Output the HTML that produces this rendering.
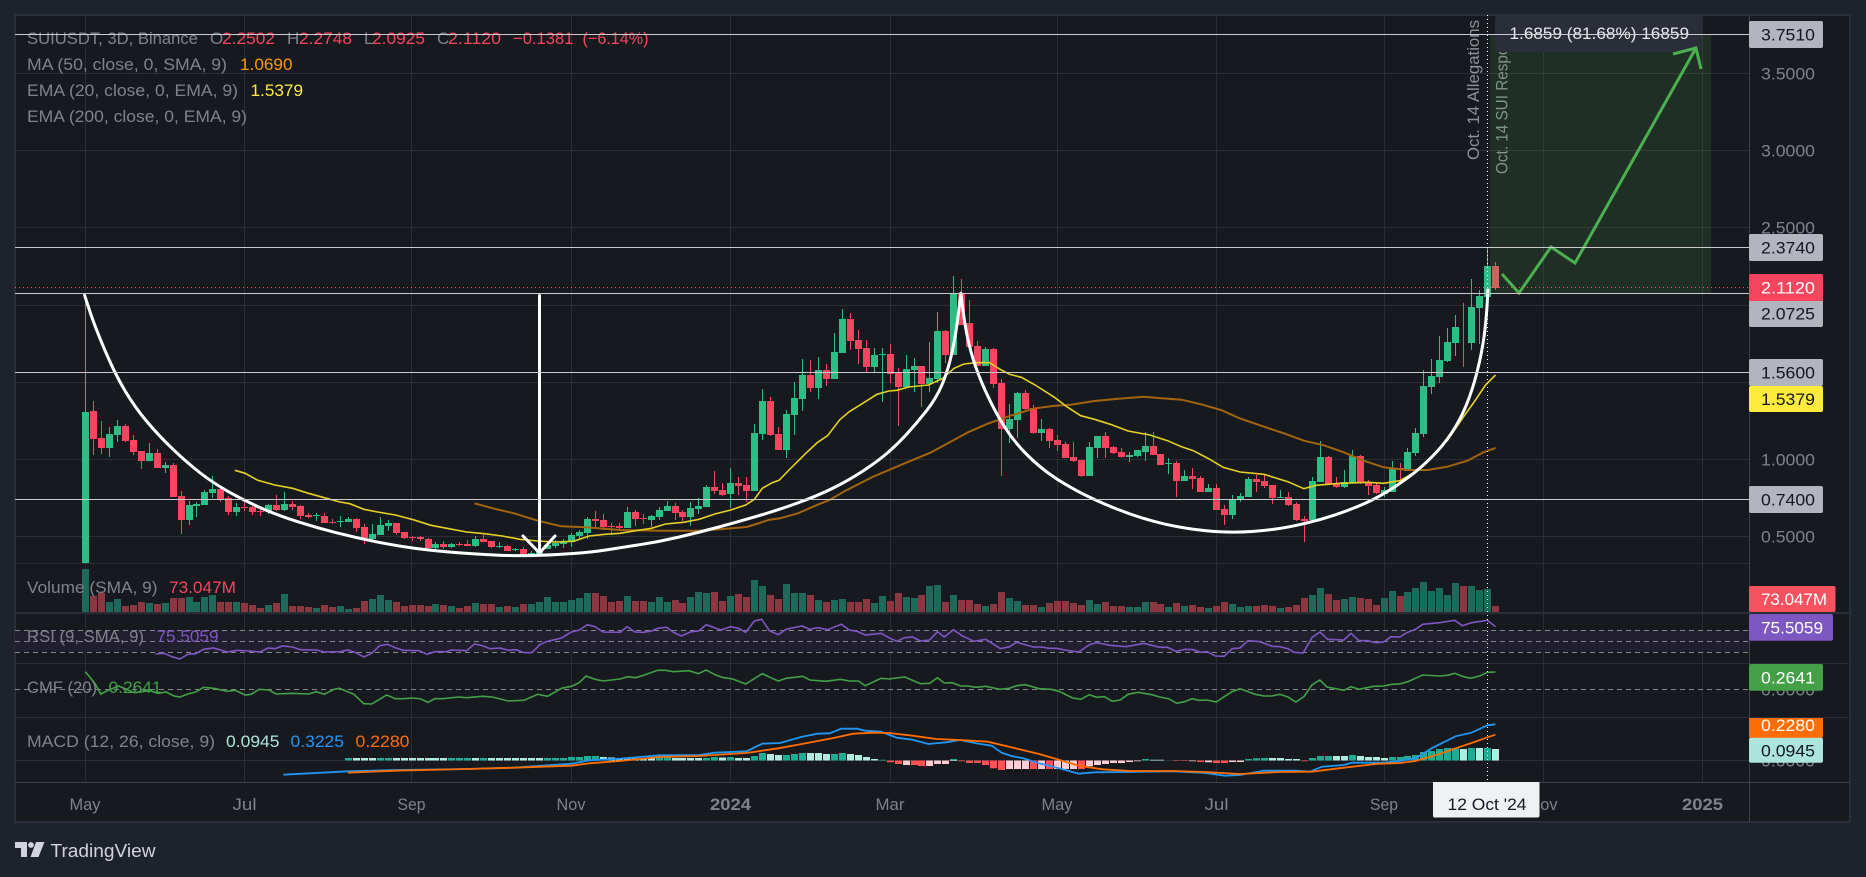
<!DOCTYPE html>
<html lang="en"><head><meta charset="utf-8"><title>SUIUSDT 3D chart</title>
<style>
html,body{margin:0;padding:0;background:#1e222d;width:1866px;height:877px;overflow:hidden}
svg{display:block;position:absolute;left:0;top:0}
text{font-family:"Liberation Sans",sans-serif;font-size:17px;white-space:pre}
.g{fill:#7f828c}.r{fill:#f7455f}
</style></head><body>
<svg width="1866" height="877" viewBox="0 0 1866 877" xmlns="http://www.w3.org/2000/svg">
<defs><clipPath id="macdclip"><rect x="1749" y="718" width="100" height="64"/></clipPath></defs>
<rect width="1866" height="877" fill="#1e222d"/>
<rect x="15" y="15" width="1835" height="807" fill="#161a1f" stroke="#2a2e39" stroke-width="2"/>

<!-- grid -->
<path fill="none" stroke="#2a2d33" stroke-width="1" d="M85.5 15V782M244.5 15V782M411.5 15V782M571.5 15V782M730.5 15V782M890.5 15V782M1057.5 15V782M1216.5 15V782M1384.5 15V782M1543.5 15V782M1702.5 15V782M15 73.5H1749M15 150.5H1749M15 227.5H1749M15 305.5H1749M15 382.5H1749M15 459.5H1749M15 536.5H1749M15 563.5H1749M15 760.5H1749"/>
<rect x="15" y="630" width="1734" height="22" fill="#211e2e"/>
<path fill="none" stroke="#2b2e36" stroke-width="2" d="M15 613H1850"/>
<path fill="none" stroke="#2b2e36" stroke-width="1" d="M15 663.5H1850M15 717.5H1850"/>
<path fill="none" stroke="#3e4148" stroke-width="1" d="M15 782.5H1850M1749.5 15V822"/>
<path fill="none" stroke="#85878e" stroke-width="1" stroke-dasharray="5 4" d="M15 630.5H1749M15 641.5H1749M15 652.5H1749M15 689.5H1749"/>

<!-- volume -->
<path fill="none" stroke="#1e6a5a" stroke-width="7" d="M85.5 569V612M109.5 602V612M117.5 599V612M149.5 603V612M165.5 603V612M189.5 597V612M196.5 602V612M204.5 597V612M212.5 595V612M236.5 602V612M268.5 605V612M284.5 594V612M316.5 608V612M340.5 606V612M348.5 609V612M372.5 599V612M380.5 595V612M388.5 600V612M435.5 604V612M451.5 606V612M475.5 603V612M499.5 607V612M515.5 607V612M531.5 604V612M539.5 602V612M547.5 597V612M555.5 602V612M563.5 602V612M571.5 600V612M579.5 598V612M587.5 593V612M627.5 596V612M651.5 602V612M659.5 597V612M667.5 602V612M690.5 597V612M698.5 592V612M706.5 593V612M730.5 596V612M754.5 580V612M762.5 586V612M786.5 584V612M794.5 593V612M802.5 593V612M818.5 600V612M834.5 600V612M842.5 599V612M874.5 603V612M882.5 596V612M906.5 597V612M914.5 598V612M929.5 586V612M937.5 585V612M953.5 595V612M985.5 606V612M1009.5 598V612M1017.5 601V612M1041.5 607V612M1089.5 600V612M1097.5 604V612M1129.5 607V612M1137.5 607V612M1145.5 602V612M1168.5 607V612M1184.5 606V612M1208.5 608V612M1232.5 604V612M1240.5 607V612M1248.5 606V612M1280.5 608V612M1312.5 595V612M1320.5 588V612M1344.5 599V612M1352.5 597V612M1384.5 598V612M1392.5 591V612M1407.5 592V612M1415.5 588V612M1423.5 582V612M1431.5 591V612M1439.5 588V612M1447.5 595V612M1455.5 583V612M1471.5 586V612M1479.5 590V612M1487.5 589V612"/>
<path fill="none" stroke="#8c3642" stroke-width="7" d="M93.5 596V612M101.5 593V612M125.5 606V612M133.5 605V612M141.5 602V612M157.5 604V612M173.5 598V612M181.5 598V612M220.5 602V612M228.5 602V612M244.5 603V612M252.5 605V612M260.5 608V612M276.5 603V612M292.5 606V612M300.5 606V612M308.5 607V612M324.5 605V612M332.5 607V612M356.5 608V612M364.5 601V612M396.5 602V612M404.5 606V612M412.5 605V612M420.5 605V612M428.5 606V612M443.5 605V612M459.5 608V612M467.5 606V612M483.5 604V612M491.5 604V612M507.5 606V612M523.5 604V612M595.5 593V612M603.5 596V612M611.5 602V612M619.5 601V612M635.5 601V612M643.5 601V612M675.5 600V612M682.5 603V612M714.5 592V612M722.5 601V612M738.5 594V612M746.5 597V612M770.5 595V612M778.5 599V612M810.5 595V612M826.5 602V612M850.5 602V612M858.5 602V612M866.5 599V612M890.5 601V612M898.5 593V612M921.5 595V612M945.5 602V612M961.5 600V612M969.5 600V612M977.5 604V612M993.5 604V612M1001.5 592V612M1025.5 605V612M1033.5 605V612M1049.5 603V612M1057.5 601V612M1065.5 601V612M1073.5 603V612M1081.5 605V612M1105.5 602V612M1113.5 606V612M1121.5 606V612M1153.5 602V612M1160.5 604V612M1176.5 603V612M1192.5 605V612M1200.5 607V612M1216.5 606V612M1224.5 602V612M1256.5 606V612M1264.5 605V612M1272.5 606V612M1288.5 607V612M1296.5 605V612M1304.5 598V612M1328.5 594V612M1336.5 600V612M1360.5 598V612M1368.5 599V612M1376.5 605V612M1400.5 596V612M1463.5 586V612M1495.5 606V612"/>

<!-- candles: wicks -->
<path fill="none" stroke="#2ebd85" stroke-width="1" d="M85.5 295V412M109.5 427V457M117.5 420V442M149.5 443V461M165.5 462V473M189.5 501V525M196.5 502V517M204.5 490V505M212.5 476V498M236.5 503V516M268.5 504V514M284.5 492V511M316.5 513V521M340.5 516V527M348.5 517V522M372.5 524V540M380.5 517V535M388.5 520V531M435.5 542V550M451.5 543V548M475.5 536V547M499.5 542V548M515.5 548V551M531.5 551V555M539.5 550V555M547.5 542V549M555.5 540V548M563.5 539V548M571.5 533V547M579.5 530V539M587.5 517V539M627.5 507V528M651.5 515V527M659.5 507V520M667.5 501V511M690.5 502V526M698.5 498V514M706.5 485V507M730.5 468V508M754.5 424V491M762.5 389V440M786.5 410V458M794.5 382V435M802.5 359V411M818.5 357V399M834.5 333V379M842.5 309V353M874.5 348V373M882.5 348V402M906.5 355V388M914.5 358V392M929.5 342V392M937.5 312V383M953.5 276V355M985.5 347V366M1009.5 404V443M1017.5 392V438M1041.5 419V441M1089.5 442V476M1097.5 436V458M1129.5 452V462M1137.5 450V457M1145.5 432V461M1168.5 458V474M1184.5 470V481M1208.5 484V492M1232.5 495V519M1240.5 493V502M1248.5 477V497M1280.5 490V498M1312.5 477V520M1320.5 441V482M1344.5 470V488M1352.5 450V484M1384.5 487V497M1392.5 461V492M1407.5 448V471M1415.5 428V456M1423.5 370V437M1431.5 359V394M1439.5 336V383M1447.5 328V362M1455.5 315V356M1471.5 279V350M1479.5 290V344M1487.5 247V297"/>
<path fill="none" stroke="#f7455f" stroke-width="1" d="M93.5 401V455M101.5 421V454M125.5 424V442M133.5 435V455M141.5 451V469M157.5 449V468M173.5 463V497M181.5 491V534M220.5 487V502M228.5 496V515M244.5 502V511M252.5 506V515M260.5 507V516M276.5 495V511M292.5 501V510M300.5 505V519M308.5 513V518M324.5 513V523M332.5 519V524M356.5 518V532M364.5 524V544M396.5 523V535M404.5 532V539M412.5 536V541M420.5 536V541M428.5 538V549M443.5 541V549M459.5 542V546M467.5 540V546M483.5 535V542M491.5 541V548M507.5 545V551M523.5 547V554M595.5 511V529M603.5 514V530M611.5 523V535M619.5 523V531M635.5 510V526M643.5 514V524M675.5 503V520M682.5 510V521M714.5 471V494M722.5 483V496M738.5 477V495M746.5 477V502M770.5 397V436M778.5 427V450M810.5 360V392M826.5 364V386M850.5 313V350M858.5 330V364M866.5 340V372M890.5 344V383M898.5 368V426M921.5 366V407M945.5 330V363M961.5 279V325M969.5 300V347M977.5 341V366M993.5 348V388M1001.5 379V476M1025.5 390V410M1033.5 405V434M1049.5 428V448M1057.5 435V451M1065.5 442V458M1073.5 442V462M1081.5 460V477M1105.5 432V458M1113.5 446V454M1121.5 448V458M1153.5 432V455M1160.5 454V465M1176.5 461V497M1192.5 468V489M1200.5 476V492M1216.5 484V510M1224.5 505V525M1256.5 475V492M1264.5 474V488M1272.5 485V504M1288.5 492V506M1296.5 502V521M1304.5 516V542M1328.5 456V484M1336.5 477V488M1360.5 455V484M1368.5 480V495M1376.5 482V494M1400.5 463V480M1463.5 303V367"/>
<!-- candles: bodies -->
<path fill="none" stroke="#2ebd85" stroke-width="7" d="M85.5 412V563M109.5 434V448M117.5 426V435M149.5 453V461M165.5 465V468M189.5 505V520M196.5 504V506M204.5 492V505M212.5 489V493M236.5 507V512M268.5 505V511M284.5 504V510M316.5 515V516M340.5 521V522M348.5 519V522M372.5 534V539M380.5 525V535M388.5 523V526M435.5 544V548M451.5 544V547M475.5 539V546M499.5 546V547M515.5 549V550M531.5 553V555M539.5 552V554M547.5 545V549M555.5 543V546M563.5 541V544M571.5 535V542M579.5 532V536M587.5 519V533M627.5 512V528M651.5 516V520M659.5 510V517M667.5 506V511M690.5 508V517M698.5 506V509M706.5 487V507M730.5 483V494M754.5 433V491M762.5 401V434M786.5 414V450M794.5 398V415M802.5 375V399M818.5 370V388M834.5 352V379M842.5 319V353M874.5 355V367M882.5 354V355M906.5 369V387M914.5 366V370M929.5 378V384M937.5 331V379M953.5 293V355M985.5 349V366M1009.5 419V429M1017.5 393V420M1041.5 429V433M1089.5 447V476M1097.5 436V448M1129.5 455V457M1137.5 450V456M1145.5 446V452M1168.5 463V464M1184.5 476V481M1208.5 488V492M1232.5 500V515M1240.5 496V500M1248.5 479V497M1280.5 497V498M1312.5 481V520M1320.5 457V482M1344.5 482V487M1352.5 456V483M1384.5 490V494M1392.5 468V492M1407.5 452V471M1415.5 433V453M1423.5 386V434M1431.5 376V387M1439.5 360V377M1447.5 342V361M1455.5 327V343M1471.5 307V343M1479.5 296V308M1487.5 266V297"/>
<path fill="none" stroke="#f7455f" stroke-width="7" d="M93.5 411V439M101.5 438V448M125.5 426V441M133.5 440V452M141.5 451V461M157.5 453V468M173.5 465V497M181.5 496V520M220.5 489V499M228.5 498V512M244.5 507V508M252.5 507V512M260.5 511V512M276.5 505V510M292.5 504V507M300.5 506V516M308.5 515V517M324.5 516V523M332.5 522V523M356.5 519V528M364.5 527V538M396.5 523V533M404.5 532V538M412.5 537V538M420.5 537V539M428.5 539V548M443.5 544V547M459.5 544V545M467.5 544V546M483.5 539V542M491.5 541V547M507.5 546V551M523.5 549V554M595.5 519V521M603.5 520V527M611.5 526V527M619.5 526V528M635.5 512V519M643.5 518V519M675.5 506V513M682.5 512V517M714.5 487V491M722.5 490V495M738.5 483V486M746.5 485V491M770.5 401V435M778.5 434V450M810.5 375V388M826.5 370V379M850.5 319V341M858.5 340V349M866.5 348V367M890.5 354V374M898.5 373V387M921.5 366V384M945.5 331V355M961.5 293V325M969.5 323V347M977.5 346V366M993.5 349V384M1001.5 383V429M1025.5 393V409M1033.5 408V433M1049.5 429V441M1057.5 440V445M1065.5 444V458M1073.5 457V461M1081.5 460V476M1105.5 436V448M1113.5 447V453M1121.5 452V457M1153.5 446V455M1160.5 454V465M1176.5 463V481M1192.5 476V479M1200.5 478V492M1216.5 488V510M1224.5 509V515M1256.5 479V482M1264.5 481V486M1272.5 485V498M1288.5 497V505M1296.5 504V520M1304.5 519V521M1328.5 457V484M1336.5 483V487M1360.5 456V483M1368.5 482V486M1376.5 485V493M1400.5 468V470"/>
<path fill="none" stroke="#e2565f" stroke-width="1" d="M1495.5 262V290"/>
<path fill="none" stroke="#e2565f" stroke-width="7" d="M1495.5 266V288"/>

<!-- MAs -->
<polyline fill="none" stroke="#a3640d" stroke-width="2" points="474.5,503.3 494.3,508.7 514,513.3 537.8,520.7 561.5,526.3 585.2,527.3 620,530 659.5,530.7 699.1,530.7 722.8,529 746.5,527 756.4,524 768.3,520 780.1,518.3 797.9,513.3 817.7,504.7 829.6,500 845.4,490.7 873.1,476.7 904.7,463.3 930.4,452.7 952.1,441 968,432.3 987.7,423.7 1011.5,415.3 1035.2,408.3 1055,405.7 1070.8,404.7 1094.5,401 1118.2,398.7 1143.9,396.7 1161.7,398.3 1181.5,399.7 1201.3,404.3 1221,410 1240,418.5 1264,426.7 1283.9,433.3 1303.9,440.7 1323.8,445.3 1343.8,452.3 1363.8,460.7 1383.7,467.3 1407.7,470 1427.6,470 1447.6,466.7 1467.5,460.7 1483.5,452.3 1495.5,448"/>
<polyline fill="none" stroke="#e6d025" stroke-width="1.6" points="234.9,470.3 245.2,473.3 257.8,480.3 274.8,485 292.6,488.3 308.4,493.3 324.2,497.7 340,502 349.9,503.7 363.8,509.3 377.6,512 395.4,515 413.2,519.7 431,525.3 448.8,528.7 466.6,532 484.4,533.7 502.2,536 520,539.3 537.8,541 555.6,542 573.3,541.3 589.2,536 605,534.3 620,533.3 635.8,530.7 651.6,528.3 665.5,524 683.3,522.3 699.1,519.3 714.9,514 730.7,510 745.7,505 754.4,499.3 762.3,488.3 772.2,482.7 779,480.3 790,469 805.8,453.3 817.7,442.3 827.6,435.7 839.5,420 849.3,411.7 861.2,404.3 877,394.3 888.9,391 896.8,390.3 908.7,387 928.4,385 942.3,378.7 954.1,368.3 964,364 975.9,362.7 989.7,362.7 999.6,369 1009.5,374.3 1021.3,377.3 1035.2,385 1055,397.7 1066.8,406.7 1080.7,415.7 1094.5,419.3 1110.3,424.3 1128.1,431 1149.9,435 1167.6,440.7 1181.5,446.7 1193.4,450.7 1209.2,459 1223,467.3 1240,472 1264,474.3 1287.9,481.7 1303.9,488.7 1315.8,485.3 1339.8,483.3 1367.7,482.3 1383.7,483.3 1399.7,480.7 1415.6,471.7 1431.6,456.7 1447.6,440 1463.6,416.7 1475.5,400 1485.5,385 1495.5,375"/>

<!-- projection box -->
<rect x="1490" y="34" width="221" height="259.5" fill="rgb(90,175,80)" fill-opacity=".14"/>

<!-- cup curves -->
<g fill="none" stroke="#fff" stroke-width="3" stroke-linejoin="round" stroke-linecap="round">
<path d="M84.6 295.3L89.75 311Q94.9 326.7 104.8 350Q114.7 373.3 124.55 390Q134.4 406.7 146.3 420.85Q158.2 435 172 448.35Q185.8 461.7 199.65 472.5Q213.5 483.3 229.35 492.15Q245.2 501 261 508Q276.8 515 296.55 521.35Q316.3 527.7 336.1 532.7Q355.9 537.7 375.65 541.7Q395.4 545.7 415.2 548.35Q435 551 454.75 552.5Q474.5 554 494.25 555Q514 556 533.8 555.5Q553.6 555 573.35 553.5Q593.1 552 606.55 549.85Q620 547.7 639.75 544.7Q659.5 541.7 679.3 537Q699.1 532.3 718.85 527Q738.6 521.7 758.4 515.85Q778.2 510 797.95 502.85Q817.7 495.7 833.5 487.85Q849.3 480 863.15 470.85Q877 461.7 886.9 453.35Q896.8 445 906.7 434.15Q916.6 423.3 926.45 410.8Q936.3 398.3 942.25 384.15Q948.2 370 952.15 351.65Q956.1 333.3 958.45 313.3L960.8 293.3"/>
<path d="M960.8 293.3L963.4 313.3Q966 333.3 970.95 351.65Q975.9 370 985.75 391.65Q995.6 413.3 1005.5 428.3Q1015.4 443.3 1027.25 455Q1039.1 466.7 1050.95 475Q1062.8 483.3 1078.65 491.65Q1094.5 500 1114.25 508Q1134 516 1153.8 521.35Q1173.6 526.7 1193.35 529.2Q1213.1 531.7 1226.55 532Q1240 532.3 1252 531.5Q1264 530.7 1275.95 529Q1287.9 527.3 1303.85 523.65Q1319.8 520 1335.8 514.65Q1351.8 509.3 1365.75 503Q1379.7 496.7 1393.7 487.5Q1407.7 478.3 1417.65 470Q1427.6 461.7 1437.6 450.85Q1447.6 440 1455.6 426.65Q1463.6 413.3 1469.55 396.65Q1475.5 380 1479.5 361.65Q1483.5 343.3 1485.1 328.3Q1486.7 313.3 1487.3 301.65L1487.9 290"/>
<path d="M539.5 295.5V553M523 536L539.5 553L555 536"/>
</g>

<!-- indicators -->
<polyline fill="none" stroke="#7e57c2" stroke-width="1.6" points="155.4,654 164.1,653.3 172,656.7 179.9,659 187.8,654.3 195.7,653.7 203.6,649.3 213.5,648 227.4,652 237.2,650.3 249.1,651 260.2,652 268.1,648 274.8,648.7 282.7,646 292.6,647 300.5,649.7 316.3,650 324.2,652 340.1,651.7 348,650 355.9,652.7 363.8,657 371.7,653.3 379.6,645.7 387.5,644.3 395.4,647.7 403.3,650.3 419.1,650.7 427,654.3 435,651.7 446.8,651.7 450.8,650 466.6,650.7 474.5,644 482.4,645.7 490.3,648.7 500.2,648 508.1,650.3 516,649.7 523.9,652.7 531.8,652.7 539.7,644.7 547.6,641.3 561.5,638 571.4,632 579.3,630 587.2,624.7 595.1,626.7 603,632 620,632.3 627.1,626.7 635,632 643.7,632.3 651.6,631 657.6,628.3 666.7,627.3 673.4,632.3 681.3,636 690.4,632 699.1,630.7 706.2,624.7 720.8,630 730.7,626.7 738.6,628.3 745.7,632.3 754.4,621 761.6,619.3 769.5,630.7 778.2,634.7 786.1,629.3 801.9,626 809.8,629.3 817.7,627.7 827.6,629.7 841.4,624.3 849.3,630 857.2,631.3 865.2,635 881,633.3 888.9,637.7 896.8,641.3 904.7,637.7 912.6,637 920.5,641 929.6,640 937.5,631.7 944.2,637 953.3,629.7 962,635.7 973.9,641.3 985.8,639.3 1000.4,648.7 1009.5,646.7 1016.6,642.3 1033.2,647 1041.1,647 1049,648.3 1056.9,648.3 1064.8,650 1078.7,652 1089.4,644.7 1096.5,642.7 1110.3,645.3 1126.1,646.7 1143.9,643.3 1159.7,647.3 1167.6,647.3 1175.6,651.3 1185.4,649.3 1193.4,649.7 1200.5,652.3 1207.2,651.7 1215.2,656 1224.2,656.3 1232.1,648.7 1240,648 1248,640.7 1260,641.7 1271.9,646.3 1279.9,646.7 1287.9,648.7 1293.9,652.3 1303.1,653 1311.9,637.7 1319.8,632 1327.8,639.3 1343.8,640 1351,633.3 1359,640.7 1367.7,640.7 1375.7,642.7 1383.7,642 1390.9,636.7 1399.7,637 1407.7,632.3 1415.6,629.3 1422.8,624.3 1439.6,622.7 1454.8,620.3 1462.4,625.7 1471.5,622.7 1487.5,620.3 1495.5,626.7"/>
<polyline fill="none" stroke="#43a047" stroke-width="1.6" points="85.4,671.7 94.9,683.3 100.8,694 108.7,690 118.6,686 126.5,689.3 134.4,692.7 150.3,690.7 158.2,693.3 166.1,692 174,696 179.9,697 187.8,694 195.7,692 203.6,687.3 213.5,688.3 227.4,691.3 235.3,690.3 245.2,695 251.1,694.3 259,689.3 268.9,690 276,694 292.6,693.3 308.4,694 316.3,691.7 324.2,694.3 334.1,689.3 339.3,688.3 353.9,694.3 363.8,703.7 371.7,704 386.7,695 395.4,698.7 403.3,698.7 413.2,698 421.1,699 427.8,702.3 435,698.7 442.9,698.7 458.7,697 466.6,697.7 482.4,696.3 492.3,697 508.1,701 523.9,700.3 537.8,694.3 547.6,696.3 561.5,688.3 571.4,686.3 579.2,682.7 586,676 595.1,679.3 603,681 620,679 627.9,676.7 635.8,677.7 643.7,675.3 657.6,670.3 665.5,670.3 673.4,671.7 689.2,670.7 698.3,673.7 706.2,670 714.9,674.7 722,677.3 732.7,679 745.7,684 762.3,673.7 772.2,678.3 778.2,681 786.1,678.3 802.7,676.3 809.8,680 825.6,681.3 840.6,679.3 849.3,681 858.4,681 865.2,685.7 881,678.3 888.9,679 904.7,677 920.5,683.7 929.6,683.3 937.5,677.7 944.2,683 952.1,682.7 960.8,686 968,686 975.9,687.3 985.8,686.3 999.6,689.3 1009.5,688.3 1016.6,685.7 1025.3,684.7 1039.1,688.7 1051,689.3 1058.9,691.3 1072.7,698 1080.7,699.3 1089.4,694.7 1096.5,697.3 1104.4,696.7 1112.3,701.3 1120.2,700 1128.1,694.3 1138,692.3 1151.8,694.7 1159.7,697 1168.8,698.7 1176.7,703.3 1184.6,701.7 1192.1,698.7 1199.3,700.3 1207.2,700 1216.3,702 1224.2,696.7 1232.1,691.7 1240,688.7 1255.2,694.3 1264,696 1271.9,696 1279.9,694.3 1287.9,697 1295.9,702 1303.9,696.7 1311.9,685 1319.8,680 1327,687 1343.8,690.3 1351,686.7 1359,689.3 1373.7,686.3 1383.7,686 1391.7,684.3 1399.7,684 1407.7,681.7 1422.8,675 1439.6,676 1447.6,675.3 1454.8,673.3 1463.6,676.7 1470.7,678.3 1479.5,676 1487.5,672.3 1495.5,672"/>

<!-- MACD histogram -->
<path fill="none" stroke="#22ab94" stroke-width="7" d="M348.5 758V760.5M380.5 758V760.5M388.5 758V760.5M451.5 758V760.5M459.5 758V760.5M467.5 758V760.5M483.5 758V760.5M547.5 758V760.5M555.5 758V760.5M563.5 758V760.5M571.5 757V760.5M579.5 757V760.5M587.5 756V760.5M595.5 756V760.5M659.5 757.3V760.5M667.5 757.3V760.5M706.5 758V760.5M714.5 757V760.5M730.5 757V760.5M754.5 756V760.5M762.5 753V760.5M786.5 755V760.5M794.5 754V760.5M802.5 753V760.5M834.5 754V760.5M842.5 753V760.5M882.5 759.7V760.5M953.5 759V760.5M1145.5 759V760.5M1248.5 759V760.5M1256.5 758.3V760.5M1264.5 758V760.5M1312.5 758V760.5M1320.5 756V760.5M1328.5 756V760.5M1352.5 755V760.5M1392.5 757V760.5M1400.5 757V760.5M1407.5 756V760.5M1415.5 755V760.5M1423.5 752V760.5M1431.5 751V760.5M1439.5 749V760.5M1447.5 748V760.5M1455.5 748V760.5M1471.5 748V760.5M1487.5 748V760.5"/>
<path fill="none" stroke="#b2ebe2" stroke-width="7" d="M356.5 758V760.5M364.5 758V760.5M372.5 758V760.5M396.5 758V760.5M404.5 758V760.5M412.5 758V760.5M420.5 758V760.5M428.5 758V760.5M435.5 758V760.5M443.5 758V760.5M475.5 758V760.5M491.5 758V760.5M499.5 758V760.5M507.5 758V760.5M515.5 758V760.5M523.5 758V760.5M531.5 758V760.5M539.5 758V760.5M603.5 757V760.5M611.5 757.5V760.5M619.5 758V760.5M627.5 758.3V760.5M635.5 758.3V760.5M643.5 758.3V760.5M651.5 758.3V760.5M675.5 758V760.5M682.5 758V760.5M690.5 758V760.5M698.5 758V760.5M722.5 757.5V760.5M738.5 758V760.5M746.5 758V760.5M770.5 754V760.5M778.5 755V760.5M810.5 753V760.5M818.5 753V760.5M826.5 754V760.5M850.5 754V760.5M858.5 755V760.5M866.5 757V760.5M874.5 759V760.5M1153.5 759.7V760.5M1160.5 759.7V760.5M1272.5 758V760.5M1280.5 758V760.5M1288.5 759V760.5M1296.5 759V760.5M1336.5 756V760.5M1344.5 756V760.5M1360.5 756V760.5M1368.5 757V760.5M1376.5 757V760.5M1384.5 758V760.5M1463.5 749V760.5M1479.5 748V760.5M1495.5 749V760.5"/>
<path fill="none" stroke="#ff5252" stroke-width="7" d="M890.5 760.5V762.3M898.5 760.5V764M914.5 760.5V765M921.5 760.5V766M961.5 760.5V761.3M969.5 760.5V763M977.5 760.5V763M985.5 760.5V765M993.5 760.5V768.3M1001.5 760.5V770M1033.5 760.5V769M1049.5 760.5V769M1081.5 760.5V769M1176.5 760.5V761M1184.5 760.5V761M1200.5 760.5V762M1216.5 760.5V763M1224.5 760.5V763M1304.5 760.5V761.3"/>
<path fill="none" stroke="#ffcdd2" stroke-width="7" d="M906.5 760.5V765M929.5 760.5V766M937.5 760.5V764M945.5 760.5V764M953.5 760.5V761M1009.5 760.5V769M1017.5 760.5V769M1025.5 760.5V769M1041.5 760.5V769M1057.5 760.5V769M1065.5 760.5V769M1073.5 760.5V769M1089.5 760.5V766.3M1097.5 760.5V765M1105.5 760.5V764M1113.5 760.5V763M1121.5 760.5V763M1129.5 760.5V762M1137.5 760.5V761.3M1192.5 760.5V761.3M1208.5 760.5V762.3M1232.5 760.5V762M1240.5 760.5V762"/>
<polyline fill="none" stroke="#2196f3" stroke-width="1.8" points="283.5,774.7 348,771.3 395.4,770 466.6,769 514,767.7 571.4,763.7 589.2,760.3 620,758.7 659.5,755.3 699.1,755 714.9,752.7 746.5,751.3 762.3,743.7 780.1,743 801.9,736.7 817.7,733.7 829.6,733.3 841.4,728.7 857.2,728.7 865.2,730.7 881,731.7 896.8,737.7 912.6,739.7 928.4,744 946.2,742.3 960.1,740 975.9,743.3 991.7,745.7 1001.6,752.7 1011.5,756 1023.3,758.3 1039.1,763.3 1058.9,768.3 1078.7,773.7 1094.5,772.3 1126.1,772 1173.6,771.3 1205.2,773 1225,775.7 1240,775 1264,770.7 1295.9,770.7 1309.9,771.7 1321.8,766.7 1343.8,765 1351.8,762.7 1383.7,762.7 1399.7,761 1415.6,758.3 1431.6,748.3 1455.6,736.3 1471.5,732.7 1487.5,725.3 1495.5,724.3"/>
<polyline fill="none" stroke="#ff6d00" stroke-width="1.8" points="348,772.7 395.4,770.7 466.6,769 514,767.7 571.4,765.7 589.2,763.3 620,761 659.5,757 699.1,756 746.5,753 778.2,748.3 801.9,744 833.5,738 853.3,733.7 873.1,732.7 888.9,733 912.6,735.7 936.3,739 960.1,740 987.7,741.7 1015.4,748.3 1039.1,754 1058.9,759.7 1078.7,765.7 1102.4,769.3 1130.1,771 1173.6,771 1205.2,772 1240,774 1279.9,772 1311.9,771.7 1343.8,767.7 1375.7,764 1399.7,763 1415.6,761 1439.6,754 1455.6,748.3 1471.5,743 1487.5,737.3 1495.5,734.7"/>

<!-- legend -->
<g class="g">
<text x="27" y="44" textLength="171" lengthAdjust="spacingAndGlyphs">SUIUSDT, 3D, Binance</text>
<text x="210" y="44">O</text><text x="287" y="44">H</text><text x="364" y="44">L</text><text x="437" y="44">C</text>
<text x="27" y="70" textLength="200" lengthAdjust="spacingAndGlyphs">MA (50, close, 0, SMA, 9)</text>
<text x="27" y="96" textLength="211" lengthAdjust="spacingAndGlyphs">EMA (20, close, 0, EMA, 9)</text>
<text x="27" y="122" textLength="220" lengthAdjust="spacingAndGlyphs">EMA (200, close, 0, EMA, 9)</text>
<text x="27" y="593" textLength="130.5" lengthAdjust="spacingAndGlyphs">Volume (SMA, 9)</text>
<text x="27" y="642" textLength="117" lengthAdjust="spacingAndGlyphs">RSI (9, SMA, 9)</text>
<text x="27" y="693" textLength="70" lengthAdjust="spacingAndGlyphs">CMF (20)</text>
<text x="27" y="747" textLength="188" lengthAdjust="spacingAndGlyphs">MACD (12, 26, close, 9)</text>
</g>
<g class="r">
<text x="222" y="44" textLength="53" lengthAdjust="spacingAndGlyphs">2.2502</text>
<text x="299" y="44" textLength="53" lengthAdjust="spacingAndGlyphs">2.2748</text>
<text x="372" y="44" textLength="53" lengthAdjust="spacingAndGlyphs">2.0925</text>
<text x="448" y="44" textLength="53" lengthAdjust="spacingAndGlyphs">2.1120</text>
<text x="513" y="44" textLength="60.5" lengthAdjust="spacingAndGlyphs">−0.1381</text>
<text x="582.5" y="44" textLength="66" lengthAdjust="spacingAndGlyphs">(−6.14%)</text>
<text x="169" y="593" textLength="67" lengthAdjust="spacingAndGlyphs">73.047M</text>
</g>
<text x="240" y="70" textLength="52.5" lengthAdjust="spacingAndGlyphs" fill="#ff9800">1.0690</text>
<text x="250.5" y="96" textLength="52.5" lengthAdjust="spacingAndGlyphs" fill="#ffeb3b">1.5379</text>
<text x="156.5" y="642" textLength="62" lengthAdjust="spacingAndGlyphs" fill="#7e57c2">75.5059</text>
<text x="108.5" y="693" textLength="53" lengthAdjust="spacingAndGlyphs" fill="#43a047">0.2641</text>
<text x="226" y="747" textLength="53.5" lengthAdjust="spacingAndGlyphs" fill="#ace5dc">0.0945</text>
<text x="290.5" y="747" textLength="53.5" lengthAdjust="spacingAndGlyphs" fill="#2196f3">0.3225</text>
<text x="355.5" y="747" textLength="54" lengthAdjust="spacingAndGlyphs" fill="#ff6d00">0.2280</text>

<!-- rotated notes -->
<text transform="translate(1479 160) rotate(-90)" textLength="140" lengthAdjust="spacingAndGlyphs" fill="#8d9097">Oct. 14 Allegations</text>
<text transform="translate(1507.5 174) rotate(-90)" textLength="152" lengthAdjust="spacingAndGlyphs" fill="#7d9687">Oct. 14 SUI Response</text>

<!-- projection label -->
<rect x="1495" y="15" width="207" height="37" rx="4" fill="#2a2e39"/>
<text x="1509.5" y="39" textLength="179.5" lengthAdjust="spacingAndGlyphs" fill="#e8e9ec">1.6859 (81.68%) 16859</text>

<!-- projection arrow -->
<g fill="none" stroke="#4caf50" stroke-width="3" stroke-linejoin="miter">
<polyline points="1502,274 1519,293 1551,247 1575,263 1696,48"/>
<path d="M1673 54L1696 48L1701 69"/>
</g>

<!-- horizontal levels -->
<path fill="none" stroke="#c9cbd0" stroke-width="1" d="M15 34.5H1749M15 247.5H1749M15 293.5H1749M15 372.5H1749M15 499.5H1749"/>
<path fill="none" stroke="#f7525f" stroke-width="1" stroke-dasharray="1 3" d="M15 287.5H1749"/>
<path fill="none" stroke="#fff" stroke-width="1" stroke-dasharray="1 3" d="M1487.5 15V782"/>

<!-- price axis -->
<g class="g">
<text x="1761" y="79.5" textLength="54" lengthAdjust="spacingAndGlyphs">3.5000</text>
<text x="1761" y="156.5" textLength="54" lengthAdjust="spacingAndGlyphs">3.0000</text>
<text x="1761" y="233.5" textLength="54" lengthAdjust="spacingAndGlyphs">2.5000</text>
<text x="1761" y="465.5" textLength="54" lengthAdjust="spacingAndGlyphs">1.0000</text>
<text x="1761" y="542.5" textLength="54" lengthAdjust="spacingAndGlyphs">0.5000</text>
<text x="1761" y="695.5" textLength="54" lengthAdjust="spacingAndGlyphs">0.0000</text>
<text x="1761" y="766.5" textLength="54" lengthAdjust="spacingAndGlyphs">0.0000</text>
</g>
<g>
<rect x="1749" y="21" width="74" height="27" rx="2" fill="#b2b5be"/><text x="1761" y="40.5" textLength="54" lengthAdjust="spacingAndGlyphs" fill="#131722">3.7510</text>
<rect x="1749" y="234" width="74" height="27" rx="2" fill="#b2b5be"/><text x="1761" y="253.5" textLength="54" lengthAdjust="spacingAndGlyphs" fill="#131722">2.3740</text>
<rect x="1749" y="300" width="74" height="27" rx="2" fill="#b2b5be"/><text x="1761" y="319.5" textLength="54" lengthAdjust="spacingAndGlyphs" fill="#131722">2.0725</text>
<rect x="1749" y="274" width="74" height="27" rx="2" fill="#f7455f"/><text x="1761" y="293.5" textLength="54" lengthAdjust="spacingAndGlyphs" fill="#fff">2.1120</text>
<rect x="1749" y="359" width="74" height="27" rx="2" fill="#b2b5be"/><text x="1761" y="378.5" textLength="54" lengthAdjust="spacingAndGlyphs" fill="#131722">1.5600</text>
<rect x="1749" y="386" width="74" height="26" rx="2" fill="#ffeb3b"/><text x="1761" y="405" textLength="54" lengthAdjust="spacingAndGlyphs" fill="#131722">1.5379</text>
<rect x="1749" y="486" width="74" height="27" rx="2" fill="#b2b5be"/><text x="1761" y="505.5" textLength="54" lengthAdjust="spacingAndGlyphs" fill="#131722">0.7400</text>
<rect x="1749" y="586" width="86.5" height="26" rx="2" fill="#f7525f"/><text x="1761" y="605" textLength="66" lengthAdjust="spacingAndGlyphs" fill="#fff">73.047M</text>
<rect x="1749" y="614" width="84" height="26.7" rx="2" fill="#7e57c2"/><text x="1761" y="633.5" textLength="62" lengthAdjust="spacingAndGlyphs" fill="#fff">75.5059</text>
<rect x="1749" y="664" width="74" height="26.7" rx="2" fill="#43a047"/><text x="1761" y="683.5" textLength="54" lengthAdjust="spacingAndGlyphs" fill="#fff">0.2641</text>
<g clip-path="url(#macdclip)"><rect x="1749" y="712" width="74" height="26" rx="2" fill="#ff6d00"/><text x="1761" y="731" textLength="54" lengthAdjust="spacingAndGlyphs" fill="#fff">0.2280</text></g>
<rect x="1749" y="737.7" width="74" height="25" rx="2" fill="#ace5dc"/><text x="1761" y="756.5" textLength="54" lengthAdjust="spacingAndGlyphs" fill="#131722">0.0945</text>
</g>

<!-- time axis -->
<g class="g">
<text x="69.5" y="810" textLength="31" lengthAdjust="spacingAndGlyphs">May</text>
<text x="232.5" y="810" textLength="24" lengthAdjust="spacingAndGlyphs">Jul</text>
<text x="397.5" y="810" textLength="28" lengthAdjust="spacingAndGlyphs">Sep</text>
<text x="556.5" y="810" textLength="29" lengthAdjust="spacingAndGlyphs">Nov</text>
<text x="710" y="810" textLength="41" lengthAdjust="spacingAndGlyphs" font-weight="bold">2024</text>
<text x="875.5" y="810" textLength="29" lengthAdjust="spacingAndGlyphs">Mar</text>
<text x="1041.5" y="810" textLength="31" lengthAdjust="spacingAndGlyphs">May</text>
<text x="1204.5" y="810" textLength="24" lengthAdjust="spacingAndGlyphs">Jul</text>
<text x="1370" y="810" textLength="28" lengthAdjust="spacingAndGlyphs">Sep</text>
<text x="1528.5" y="810" textLength="29" lengthAdjust="spacingAndGlyphs">Nov</text>
<text x="1682" y="810" textLength="41" lengthAdjust="spacingAndGlyphs" font-weight="bold">2025</text>
</g>
<path d="M1433 782H1539.5V815.5a2 2 0 0 1-2 2H1435a2 2 0 0 1-2-2Z" fill="#f0f1f2"/>
<text x="1447.5" y="810" textLength="79" lengthAdjust="spacingAndGlyphs" fill="#131722">12 Oct '24</text>

<!-- TradingView logo -->
<g fill="#d1d4dc">
<path d="M15 842H27V857H21V848H15Z"/>
<circle cx="31" cy="845" r="2.9"/>
<path d="M36 842H44.5L38.5 857H30.5Z"/>
<text x="50.5" y="857" style="font-size:18px" textLength="105" lengthAdjust="spacingAndGlyphs">TradingView</text>
</g>
</svg>
</body></html>
